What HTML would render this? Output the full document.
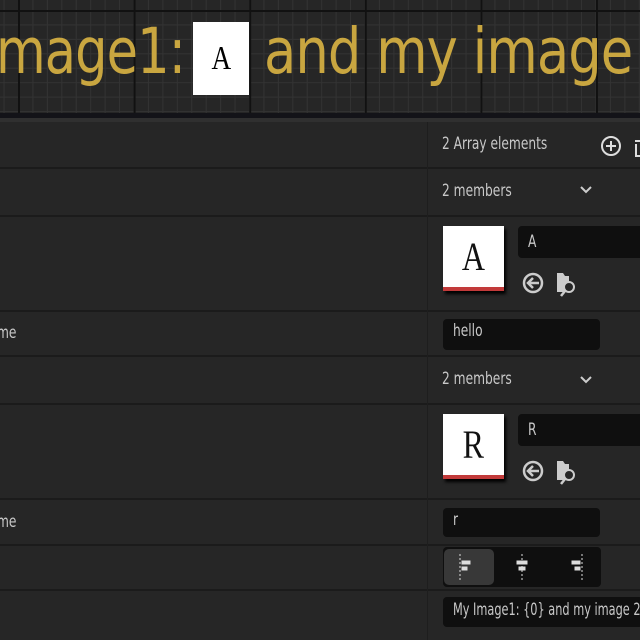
<!DOCTYPE html>
<html><head><style>
body{margin:0;width:640px;height:640px;overflow:hidden;background:#242424;font-family:"Liberation Sans",sans-serif;position:relative}
.top{position:absolute;left:0;top:0;width:640px;height:113px;background-color:#262626;
background-image:
linear-gradient(90deg,#111 0 2px,transparent 2px),
linear-gradient(#111 0 2px,transparent 2px),
linear-gradient(90deg,#333 0 1px,transparent 1px),
linear-gradient(#333 0 1px,transparent 1px);
background-size:115.6px 115.6px,115.6px 115.6px,14.45px 14.45px,14.45px 14.45px;
background-position:18px 0,0 10px,18px 0,0 10px}
.ti{position:absolute;top:15px;font-size:63px;color:#c9a640;white-space:nowrap;letter-spacing:-1px;transform-origin:0 0;font-family:"DejaVu Sans Condensed","Liberation Sans",sans-serif}
.imgA{position:absolute;left:193px;top:22px;width:56px;height:73px;background:#fff;font-family:"Liberation Serif",serif;font-size:34px;text-align:center;line-height:73px;color:#000}
.band{position:absolute;left:0;top:113px;width:640px;height:5px;background:#131318}
.band2{position:absolute;left:0;top:118px;width:640px;height:4px;background:#303030}
.row{position:absolute;left:0;width:640px;background:#262626;border-bottom:2px solid #1b1b1b;box-sizing:border-box}
.vl{position:absolute;left:427px;top:122px;width:1px;height:518px;background:#1e1e1e}
.t{position:absolute;color:#c8c8c8;font-size:17px;font-family:"DejaVu Sans Condensed","Liberation Sans",sans-serif;transform:scaleX(0.8);transform-origin:0 0;white-space:nowrap}
.box{position:absolute;background:#0f0f0f;border-radius:4px}
.thumb{position:absolute;width:61px;height:61px;background:#fff;border-bottom:4px solid #c23a3a;font-family:"Liberation Serif",serif;font-size:40px;text-align:center;line-height:61px;color:#111;box-shadow:2px 3px 3px #000}
.thumb span,.imgA span{display:inline-block;transform:scaleX(0.8)}
</style></head><body>
<div class="top"></div>
<div class="ti" style="left:-4px;transform:scaleX(0.9)">mage1:</div>
<div class="ti" style="left:264px;transform:scaleX(0.93)">and my image</div>
<div class="imgA"><span>A</span></div>
<div class="band"></div><div class="band2"></div>
<div class="row" style="top:122px;height:47px"></div>
<div class="row" style="top:169px;height:48px"></div>
<div class="row" style="top:217px;height:95px"></div>
<div class="row" style="top:312px;height:45px"></div>
<div class="row" style="top:357px;height:48px"></div>
<div class="row" style="top:405px;height:95px"></div>
<div class="row" style="top:500px;height:46px"></div>
<div class="row" style="top:546px;height:45px"></div>
<div class="row" style="top:591px;height:49px;border:none"></div>
<div class="vl"></div>
<div class="t" style="left:442px;top:134px">2 Array elements</div>
<svg style="position:absolute;left:600px;top:135px" width="40" height="24"><circle cx="11" cy="11" r="9" fill="none" stroke="#ddd" stroke-width="2"/><path d="M11 6v10M6 11h10" stroke="#ddd" stroke-width="2"/><path d="M35 6h6M36 9v12h5" stroke="#ddd" stroke-width="2" fill="none"/></svg>
<div class="t" style="left:442px;top:181px">2 members</div>
<svg style="position:absolute;left:579px;top:185px" width="14" height="10"><path d="M2 2l5 5 5-5" stroke="#ccc" stroke-width="2" fill="none"/></svg>
<div class="thumb" style="left:443px;top:226px"><span>A</span></div>
<div class="box" style="left:518px;top:226px;width:130px;height:32px"></div>
<div class="t" style="left:528px;top:232px">A</div>
<svg style="position:absolute;left:521px;top:270px" width="60" height="28"><circle cx="12" cy="13" r="9" fill="none" stroke="#ccc" stroke-width="2.5"/><path d="M18 13H8M12 8l-5 5 5 5" stroke="#ccc" stroke-width="2.5" fill="none"/><path d="M36 3h6l2 3h4v16H36z" fill="#ccc"/><circle cx="48" cy="17" r="5" fill="#262626" stroke="#ccc" stroke-width="2"/><path d="M44 21l-4 5" stroke="#ccc" stroke-width="2.5"/></svg>
<div class="t" style="left:-3px;top:323px">me</div>
<div class="box" style="left:443px;top:319px;width:157px;height:31px"></div>
<div class="t" style="left:453px;top:321px">hello</div>
<div class="t" style="left:442px;top:369px">2 members</div>
<svg style="position:absolute;left:579px;top:375px" width="14" height="10"><path d="M2 2l5 5 5-5" stroke="#ccc" stroke-width="2" fill="none"/></svg>
<div class="thumb" style="left:443px;top:414px"><span>R</span></div>
<div class="box" style="left:518px;top:414px;width:130px;height:32px"></div>
<div class="t" style="left:528px;top:420px">R</div>
<svg style="position:absolute;left:521px;top:458px" width="60" height="28"><circle cx="12" cy="13" r="9" fill="none" stroke="#ccc" stroke-width="2.5"/><path d="M18 13H8M12 8l-5 5 5 5" stroke="#ccc" stroke-width="2.5" fill="none"/><path d="M36 3h6l2 3h4v16H36z" fill="#ccc"/><circle cx="48" cy="17" r="5" fill="#262626" stroke="#ccc" stroke-width="2"/><path d="M44 21l-4 5" stroke="#ccc" stroke-width="2.5"/></svg>
<div class="t" style="left:-3px;top:512px">me</div>
<div class="box" style="left:443px;top:508px;width:157px;height:29px"></div>
<div class="t" style="left:453px;top:510px">r</div>
<div class="box" style="left:443px;top:547px;width:158px;height:40px"></div>
<div style="position:absolute;left:444px;top:549px;width:50px;height:36px;background:#383838;border-radius:5px"></div>
<svg style="position:absolute;left:455px;top:552px" width="140" height="30"><g stroke="#ddd" fill="#ddd"><path d="M5 2v26" stroke-dasharray="2 2"/><rect x="7" y="9" width="8" height="3"/><rect x="7" y="15" width="5" height="3"/><path d="M67 2v26" stroke-dasharray="2 2"/><rect x="62" y="9" width="10" height="3"/><rect x="64" y="15" width="6" height="3"/><path d="M127 2v26" stroke-dasharray="2 2"/><rect x="117" y="9" width="8" height="3"/><rect x="120" y="15" width="5" height="3"/></g></svg>
<div class="box" style="left:443px;top:597px;width:200px;height:30px"></div>
<div class="t" style="left:453px;top:600px;transform:scaleX(0.74)">My Image1: {0} and my image 2</div>
</body></html>
